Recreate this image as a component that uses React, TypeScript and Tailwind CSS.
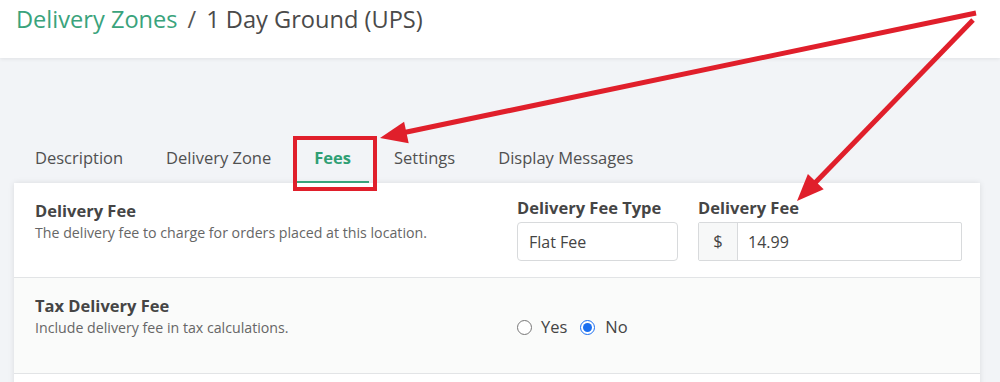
import { useState } from "react";

const tabs = ["Description", "Delivery Zone", "Fees", "Settings", "Display Messages"];

export default function App() {
  const [activeTab, setActiveTab] = useState("Fees");
  const [taxFee, setTaxFee] = useState<"yes" | "no">("no");

  return (
    <div
      className="relative w-[1000px] h-[382px] overflow-hidden bg-[#f2f4f7]"
      style={{ fontFamily: '"Open Sans", "Noto Sans", sans-serif' }}
    >
      {/* header */}
      <div className="h-[58px] bg-white shadow-[0_1px_4px_rgba(0,0,0,0.08)] px-4 pt-[3px]">
        <div className="flex items-center text-[23.6px] leading-[32px]">
          <span className="text-[#3aa37c]">Delivery Zones</span>
          <span className="mx-[10px] text-[#555]">/</span>
          <span className="text-[#4a4a4a]">1 Day Ground (UPS)</span>
        </div>
      </div>

      <div className="pl-[14px] pr-[20px] pt-[77px]">
        {/* tabs */}
        <div className="flex gap-[7px] pl-[3px]">
          {tabs.map((tab) => (
            <button
              key={tab}
              onClick={() => setActiveTab(tab)}
              className={
                activeTab === tab
                  ? "px-[18px] pt-[11px] pb-[11px] text-[16.5px] leading-[24px] font-bold text-[#2f9f74] border-b-2 border-[#3aa37c]"
                  : "px-[18px] pt-[11px] pb-[11px] text-[16.5px] leading-[24px] text-[#505050] border-b-2 border-transparent"
              }
            >
              {tab}
            </button>
          ))}
        </div>

        {/* card */}
        <div className="bg-white shadow-[0_0_6px_rgba(0,0,0,0.10)]">
          <div className="flex pl-[21px] pr-[18px] pt-[13px] pb-[16px] border-b border-[#e2e4e6]">
            <div className="flex-1 pt-[3px]">
              <div className="text-[16.5px] leading-[24px] font-bold text-[#454545]">Delivery Fee</div>
              <div className="text-[14.2px] leading-[20px] text-[#666]">
                The delivery fee to charge for orders placed at this location.
              </div>
            </div>
            <div className="flex gap-[20px]">
              <div className="w-[161px]">
                <div className="text-[16.5px] leading-[24px] font-bold text-[#454545] mb-[2px]">Delivery Fee Type</div>
                <div className="h-[39px] flex items-center px-[11px] border border-[#d8dadc] rounded-[4px] text-[16px] text-[#444]">
                  Flat Fee
                </div>
              </div>
              <div className="w-[264px]">
                <div className="text-[16.5px] leading-[24px] font-bold text-[#454545] mb-[2px]">Delivery Fee</div>
                <div className="h-[39px] flex border border-[#d8dadc] rounded-[2px] text-[16px] text-[#444]">
                  <div className="w-[39px] flex items-center justify-center bg-[#f7f8f8] border-r border-[#d8dadc] text-[16.5px]">$</div>
                  <div className="flex items-center px-[10px]">14.99</div>
                </div>
              </div>
            </div>
          </div>

          <div className="flex h-[96px] pl-[21px] pr-[18px] pt-[16px] bg-[#fafbfa] border-b border-[#e2e4e6]">
            <div className="flex-1">
              <div className="text-[16.5px] leading-[24px] font-bold text-[#454545]">Tax Delivery Fee</div>
              <div className="text-[14.2px] leading-[20px] text-[#666]">Include delivery fee in tax calculations.</div>
            </div>
            <div className="w-[445px] flex items-start pt-[21px] text-[16.5px] leading-[24px] text-[#444]">
              <label className="flex items-center cursor-pointer" onClick={() => setTaxFee("yes")}>
                <Radio checked={taxFee === "yes"} />
                <span className="ml-[9px]">Yes</span>
              </label>
              <label className="flex items-center ml-[13px] cursor-pointer" onClick={() => setTaxFee("no")}>
                <Radio checked={taxFee === "no"} />
                <span className="ml-[10px]">No</span>
              </label>
            </div>
          </div>

          <div className="h-[40px] bg-white" />
        </div>
      </div>

      {/* annotation overlay */}
      <svg className="absolute inset-0 pointer-events-none" width="1000" height="382" viewBox="0 0 1000 382">
        <rect x="295" y="138" width="80" height="51" fill="none" stroke="#e01f2b" strokeWidth="4" />
        <line x1="976" y1="13" x2="402" y2="133" stroke="#e01f2b" strokeWidth="5" />
        <polygon points="380,138 408.7,143.3 404.1,121.7" fill="#e01f2b" />
        <line x1="973" y1="20" x2="812" y2="186" stroke="#e01f2b" strokeWidth="5" />
        <polygon points="797,201 823.7,189.3 807.9,173.9" fill="#e01f2b" />
      </svg>
    </div>
  );
}

function Radio({ checked }: { checked: boolean }) {
  return checked ? (
    <span className="w-[15px] h-[15px] rounded-full border-[1.5px] border-[#1a6ff0] flex items-center justify-center bg-white">
      <span className="w-[9px] h-[9px] rounded-full bg-[#1a6ff0]" />
    </span>
  ) : (
    <span className="w-[15px] h-[15px] rounded-full border border-[#777] bg-white" />
  );
}
